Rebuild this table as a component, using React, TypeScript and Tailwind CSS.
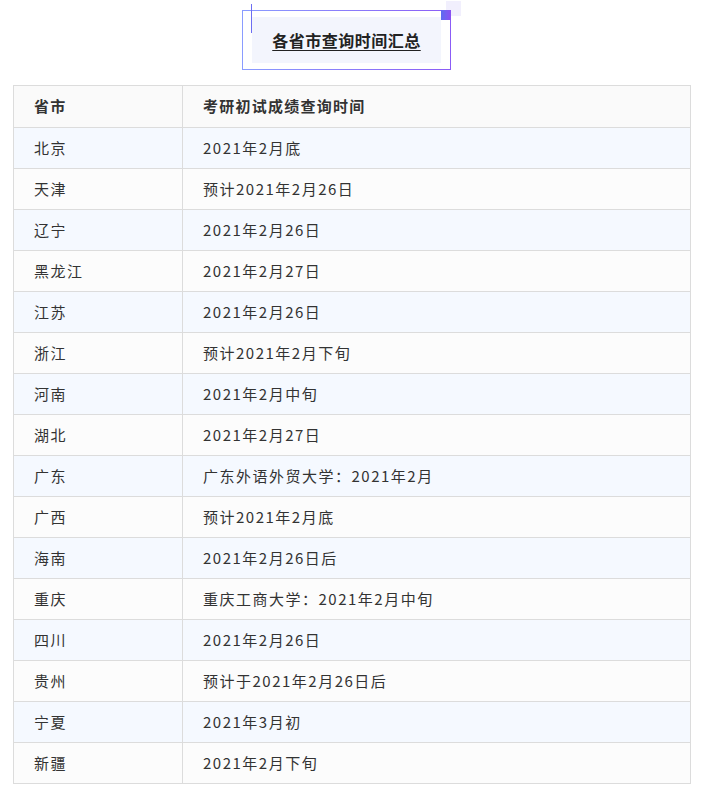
import React from 'react'

const rows: [string, string][] = [
  ['北京', '2021年2月底'],
  ['天津', '预计2021年2月26日'],
  ['辽宁', '2021年2月26日'],
  ['黑龙江', '2021年2月27日'],
  ['江苏', '2021年2月26日'],
  ['浙江', '预计2021年2月下旬'],
  ['河南', '2021年2月中旬'],
  ['湖北', '2021年2月27日'],
  ['广东', '广东外语外贸大学：2021年2月'],
  ['广西', '预计2021年2月底'],
  ['海南', '2021年2月26日后'],
  ['重庆', '重庆工商大学：2021年2月中旬'],
  ['四川', '2021年2月26日'],
  ['贵州', '预计于2021年2月26日后'],
  ['宁夏', '2021年3月初'],
  ['新疆', '2021年2月下旬'],
]

export default function App() {
  return (
    <div
      className="w-[704px] min-h-[790px] bg-white pt-[10px] text-[#333]"
      style={{ fontFamily: '"Noto Sans CJK SC", "Noto Sans", sans-serif' }}
    >
      {/* 标题框 */}
      <div className="pl-[242px]">
        <div className="relative w-[209px] h-[60px] border [border-image:linear-gradient(90deg,#8a9cff,#8b5cf6)_1] p-[6px_9px_6px_9px]">
          {/* 左上竖线 */}
          <div className="absolute left-[8px] top-[-7px] w-[1px] h-[29px] bg-[#6d6ef2]" />
          {/* 右上淡色块 */}
          <div className="absolute right-[-11px] top-[-10px] w-[15px] h-[15px] bg-[#f1effd]" />
          {/* 右上方块 */}
          <div className="absolute right-[-1px] top-[-1px] w-[10px] h-[10px] bg-gradient-to-r from-[#5b6cf0] to-[#8a4ff2]" />
          <div className="h-full bg-[#f3f5fd] flex items-center justify-center">
            <span className="text-[16px] font-bold underline underline-offset-[3px] tracking-[0.5px] text-[#222]">
              各省市查询时间汇总
            </span>
          </div>
        </div>
      </div>

      {/* 表格 */}
      <div className="mt-[15px] mx-[13px] border border-[#dcdcdc]">
        <div className="flex h-[41px] bg-[#fafafa] font-bold text-[15px] tracking-[1.25px]">
          <div className="w-[169px] shrink-0 border-r border-[#dcdcdc] flex items-center pl-[20px]">省市</div>
          <div className="flex-1 flex items-center pl-[20px]">考研初试成绩查询时间</div>
        </div>
        {rows.map(([city, time], i) => (
          <div
            key={city}
            className={`flex h-[41px] border-t border-[#dcdcdc] text-[15px] tracking-[1.5px] ${
              i % 2 === 0 ? 'bg-[#f5f9ff]' : 'bg-[#fcfcfc]'
            }`}
          >
            <div className="w-[169px] shrink-0 border-r border-[#dcdcdc] flex items-center pl-[20px]">{city}</div>
            <div className="flex-1 flex items-center pl-[20px]">{time}</div>
          </div>
        ))}
      </div>
    </div>
  )
}
